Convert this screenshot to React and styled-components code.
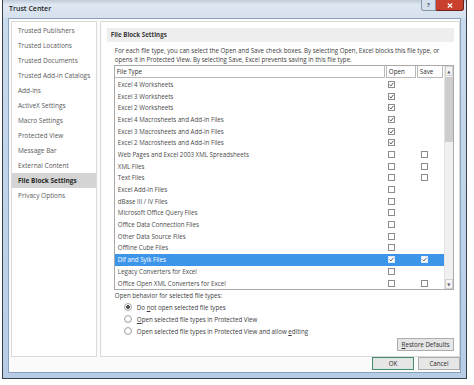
import React from 'react';
import styled, { createGlobalStyle } from 'styled-components';

const GlobalStyle = createGlobalStyle`
    html, body {
        margin: 0;
        padding: 0;
        background: #ffffff;
    }
    body {
        font-family: "Open Sans", "Noto Sans", "DejaVu Sans", sans-serif;
        font-size: 6.2px;
        color: #3c3c3c;
    }
`;

const Window = styled.div`
    width: 465px;
    height: 379px;
    margin-left: 2px;
    display: flex;
    flex-direction: column;
    border: 1px solid #3b4048;
    border-top: none;
    background: linear-gradient(#c9dbee, #b7cde6);
    padding: 0 5px 5px 5px;
    box-sizing: border-box;
`;

const TitleBar = styled.div`
    height: 18px;
    flex: none;
    display: flex;
    align-items: flex-start;
    margin: 0 -5px;
    padding: 0 2px 0 6px;
    background: linear-gradient(#bfcbd8, #dfe8f2 25%, #d6e1ee);
`;

const Title = styled.span`
    font-size: 7px;
    font-weight: 600;
    color: #1d1d1d;
    line-height: 18px;
`;

const TitleButtons = styled.div`
    margin-left: auto;
    display: flex;
`;

const HelpButton = styled.div`
    width: 15px;
    height: 11px;
    display: flex;
    align-items: center;
    justify-content: center;
    box-sizing: border-box;
    border: 1px solid #8796aa;
    border-top: none;
    border-radius: 0 0 0 3px;
    background-color: #d5e0ed;
    color: #4b5868;
    font-size: 6px;
    font-weight: bold;
`;

const CloseButton = styled.div`
    width: 28px;
    height: 11px;
    display: flex;
    align-items: center;
    justify-content: center;
    box-sizing: border-box;
    border: 1px solid #6e2118;
    border-top: none;
    border-left: none;
    border-radius: 0 0 3px 0;
    background-color: #c9402f;
    color: #ffffff;
`;

const Client = styled.div`
    flex: 1;
    display: flex;
    flex-direction: column;
    background: #fbfbfb;
    border: 1px solid #8ba2bd;
    padding: 2px 0 0 1px;
`;

const Panels = styled.div`
    display: flex;
    gap: 3px;
    height: 336px;
    padding-left: 1px;
`;

const NavPanel = styled.div`
    width: 86px;
    background: #ffffff;
    border: 1px solid #dadada;
    box-sizing: border-box;
    padding-top: 1px;
`;

const NavItem = styled.div`
    height: 15px;
    line-height: 15px;
    padding-left: 6px;
    font-size: 6.5px;
    color: ${(p) => (p.$active ? '#262626' : '#5a5a5a')};
    font-weight: ${(p) => (p.$active ? 'bold' : 'normal')};
    background: ${(p) => (p.$active ? '#d4d4d4' : 'transparent')};
`;

const MainPanel = styled.div`
    width: 361px;
    background: #ffffff;
    border: 1px solid #dadada;
    box-sizing: border-box;
    padding: 6px 5px 0 6px;
    display: flex;
    flex-direction: column;
`;

const SectionHeader = styled.div`
    height: 14px;
    line-height: 14px;
    background: #eeeeee;
    padding-left: 4px;
    font-weight: bold;
    color: #3a3a3a;
`;

const Content = styled.div`
    padding: 4px 0 0 7px;
    display: flex;
    flex-direction: column;
`;

const Description = styled.p`
    margin: 0;
    line-height: 9px;
    color: #3c3c3c;
    padding-left: 1px;
`;

const Table = styled.div`
    margin-top: 1px;
    height: 225px;
    border: 1px solid #a9a9a9;
    box-sizing: border-box;
    display: grid;
    grid-template-columns: 271px 31px 27px 9px;
    grid-template-rows: 12px 1fr;
    background: #ffffff;
`;

const HeadCell = styled.div`
    border: 1px solid #b9b9b9;
    border-top: none;
    border-left: ${(p) => (p.$first ? 'none' : '1px solid #b9b9b9')};
    line-height: 11px;
    padding-left: 2px;
    color: #2e2e2e;
    margin-right: 1px;
`;

const Rows = styled.div`
    grid-column: 1 / 4;
    display: flex;
    flex-direction: column;
    padding-top: 0.5px;
`;

const Row = styled.div`
    height: 11.7px;
    display: grid;
    grid-template-columns: 272px 34px 1fr;
    align-items: center;
    background: ${(p) => (p.$selected ? '#3d95ea' : 'transparent')};
    color: ${(p) => (p.$selected ? '#ffffff' : '#4a4a4a')};
`;

const RowName = styled.span`
    padding-left: 3px;
    white-space: nowrap;
`;

const Scrollbar = styled.div`
    grid-row: 1 / 3;
    grid-column: 4;
    display: flex;
    flex-direction: column;
    background: #f0f0f0;
    border-left: 1px solid #e3e3e3;
`;

const ScrollArrow = styled.div`
    height: 10px;
    display: flex;
    align-items: center;
    justify-content: center;
    color: #606060;
    font-size: 4px;
    background: #f4f4f4;
    border: 1px solid #d0d0d0;
    box-sizing: border-box;
`;

const ScrollThumb = styled.div`
    height: 65px;
    margin: 1px 0 0 0;
    background: #cdcdcd;
`;

const ScrollSpacer = styled.div`
    flex: 1;
`;

const BoxSvg = styled.svg`
    display: block;
    width: 7px;
    height: 7px;
`;

const CheckBox = ({ checked, inverted }) => (
    <BoxSvg viewBox="0 0 7 7">
        <rect
            x="0.5"
            y="0.5"
            width="6"
            height="6"
            fill="#ffffff"
            stroke={inverted ? '#dbe9f8' : '#8c8c8c'}
            strokeWidth="1"
        />
        {checked && (
            <path
                d="M1.6 3.6 L2.9 5 L5.4 1.8"
                fill="none"
                stroke="#4a4a4a"
                strokeWidth="0.9"
            />
        )}
    </BoxSvg>
);

const CellBox = styled.div`
    display: flex;
    padding-left: ${(p) => p.$pad}px;
`;

const BehaviorLabel = styled.div`
    margin-top: 1px;
    line-height: 10px;
    padding-left: 1px;
`;

const RadioList = styled.div`
    display: flex;
    flex-direction: column;
    padding-left: 10px;
`;

const RadioRow = styled.div`
    height: 12px;
    display: flex;
    align-items: center;
    gap: 5px;
    color: #3c3c3c;
`;

const Radio = styled.span`
    width: 6px;
    height: 6px;
    border-radius: 50%;
    border: 1px solid #a5a5a5;
    background: radial-gradient(circle, ${(p) => (p.$on ? '#555 0 1.6px' : '#fff 0 1.6px')}, #f4f4f4 2px);
    flex: none;
`;

const Key = styled.u`
    text-decoration: underline;
`;

const RestoreRow = styled.div`
    display: flex;
    justify-content: flex-end;
    margin-top: 1px;
`;

const Button = styled.button`
    font-family: inherit;
    font-size: 6.2px;
    color: #2e2e2e;
    width: ${(p) => p.$w}px;
    height: 13px;
    padding: 0;
    border: 1px solid ${(p) => (p.$default ? '#4e8a6c' : '#adadad')};
    box-shadow: ${(p) => (p.$default ? 'inset 0 0 0 1px #d6e8df' : 'none')};
    background: #e6e6e6;
    border-radius: 0;
`;

const Footer = styled.div`
    flex: 1;
    display: flex;
    justify-content: flex-end;
    align-items: center;
    gap: 4px;
    padding-bottom: 2px;
`;

const navItems = [
    'Trusted Publishers',
    'Trusted Locations',
    'Trusted Documents',
    'Trusted Add-in Catalogs',
    'Add-ins',
    'ActiveX Settings',
    'Macro Settings',
    'Protected View',
    'Message Bar',
    'External Content',
    'File Block Settings',
    'Privacy Options'
];

// open: true = checked, false = empty box; save: undefined = no box
const fileTypes = [
    { name: 'Excel 4 Worksheets', open: true },
    { name: 'Excel 3 Worksheets', open: true },
    { name: 'Excel 2 Worksheets', open: true },
    { name: 'Excel 4 Macrosheets and Add-in Files', open: true },
    { name: 'Excel 3 Macrosheets and Add-in Files', open: true },
    { name: 'Excel 2 Macrosheets and Add-in Files', open: true },
    { name: 'Web Pages and Excel 2003 XML Spreadsheets', open: false, save: false },
    { name: 'XML Files', open: false, save: false },
    { name: 'Text Files', open: false, save: false },
    { name: 'Excel Add-in Files', open: false },
    { name: 'dBase III / IV Files', open: false },
    { name: 'Microsoft Office Query Files', open: false },
    { name: 'Office Data Connection Files', open: false },
    { name: 'Other Data Source Files', open: false },
    { name: 'Offline Cube Files', open: false },
    { name: 'Dif and Sylk Files', open: true, save: true, selected: true },
    { name: 'Legacy Converters for Excel', open: false },
    { name: 'Office Open XML Converters for Excel', open: false, save: false }
];

const App = () => (
    <>
        <GlobalStyle />
        <Window>
            <TitleBar>
                <Title>Trust Center</Title>
                <TitleButtons>
                    <HelpButton>?</HelpButton>
                    <CloseButton>
                        <svg width="6" height="5" viewBox="0 0 6 5">
                            <path d="M0.8 0.5 L5.2 4.5 M5.2 0.5 L0.8 4.5" stroke="#ffffff" strokeWidth="1.2" />
                        </svg>
                    </CloseButton>
                </TitleButtons>
            </TitleBar>
            <Client>
                <Panels>
                    <NavPanel>
                        {navItems.map((item) => (
                            <NavItem key={item} $active={item === 'File Block Settings'}>
                                {item}
                            </NavItem>
                        ))}
                    </NavPanel>
                    <MainPanel>
                        <SectionHeader>File Block Settings</SectionHeader>
                        <Content>
                            <Description>
                                For each file type, you can select the Open and Save check boxes. By selecting Open, Excel blocks this file type, or
                                <br />
                                opens it in Protected View. By selecting Save, Excel prevents saving in this file type.
                            </Description>
                            <Table>
                                <HeadCell $first>File Type</HeadCell>
                                <HeadCell>Open</HeadCell>
                                <HeadCell>Save</HeadCell>
                                <Scrollbar>
                                    <ScrollArrow>▲</ScrollArrow>
                                    <ScrollThumb />
                                    <ScrollSpacer />
                                    <ScrollArrow>▼</ScrollArrow>
                                </Scrollbar>
                                <Rows>
                                    {fileTypes.map((ft) => (
                                        <Row key={ft.name} $selected={ft.selected}>
                                            <RowName>{ft.name}</RowName>
                                            <CellBox $pad={1}>
                                                <CheckBox checked={ft.open} inverted={ft.selected} />
                                            </CellBox>
                                            <CellBox $pad={0}>
                                                {ft.save !== undefined && (
                                                    <CheckBox checked={ft.save} inverted={ft.selected} />
                                                )}
                                            </CellBox>
                                        </Row>
                                    ))}
                                </Rows>
                            </Table>
                            <BehaviorLabel>Open behavior for selected file types:</BehaviorLabel>
                            <RadioList>
                                <RadioRow>
                                    <Radio $on />
                                    <span>
                                        Do <Key>n</Key>ot open selected file types
                                    </span>
                                </RadioRow>
                                <RadioRow>
                                    <Radio />
                                    <span>
                                        <Key>O</Key>pen selected file types in Protected View
                                    </span>
                                </RadioRow>
                                <RadioRow>
                                    <Radio />
                                    <span>
                                        Open selected file types in Protected View and allow <Key>e</Key>diting
                                    </span>
                                </RadioRow>
                            </RadioList>
                            <RestoreRow>
                                <Button $w={57}>
                                    <Key>R</Key>estore Defaults
                                </Button>
                            </RestoreRow>
                        </Content>
                    </MainPanel>
                </Panels>
                <Footer>
                    <Button $w={42} $default>
                        OK
                    </Button>
                    <Button $w={42}>Cancel</Button>
                </Footer>
            </Client>
        </Window>
    </>
);

export default App;
